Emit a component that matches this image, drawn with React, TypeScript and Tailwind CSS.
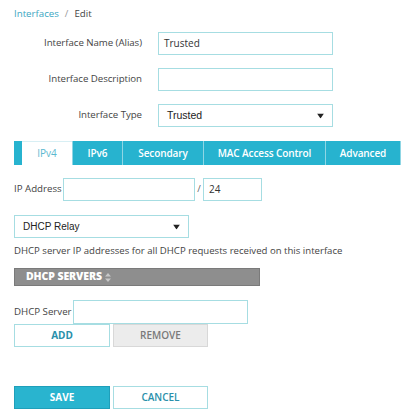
import React from "react";

const font = { fontFamily: "'Open Sans', 'Noto Sans', sans-serif" };
const selFont = { fontFamily: "'Liberation Sans', Arial, sans-serif" };

function Caret() {
  return (
    <svg width="7" height="5" viewBox="0 0 7 5" className="absolute right-[8px] top-1/2 -translate-y-1/2">
      <path d="M0 0h7L3.5 5z" fill="#222" />
    </svg>
  );
}

function Row({ label, children }: { label: string; children: React.ReactNode }) {
  return (
    <div className="flex items-center h-[23px]">
      <div className="w-[142px] text-right text-[9.7px] tracking-[-0.05px] text-[#444] whitespace-nowrap">{label}</div>
      <div className="ml-[16px]">{children}</div>
    </div>
  );
}

const tabs = ["IPv4", "IPv6", "Secondary", "MAC Access Control", "Advanced"];
const tabW = [50, 50, 81, 122, 75];

export default function App() {
  return (
    <div className="w-[403px] h-[413px] bg-white overflow-hidden" style={font}>
      <div className="pl-[14px] pt-[7px] text-[9.7px] leading-[14px] whitespace-nowrap">
        <span className="text-[#3aa6c2]">Interfaces</span>
        <span className="text-[#999] mx-[6px]">/</span>
        <span className="text-[#444]">Edit</span>
      </div>

      <div className="mt-[11px] flex flex-col gap-[13px]">
        <Row label="Interface Name (Alias)">
          <div className="w-[175px] h-[23px] border border-[#a6dde2] flex items-center px-[5px] text-[10px] text-[#333]">Trusted</div>
        </Row>
        <Row label="Interface Description">
          <div className="w-[175px] h-[23px] border border-[#a6dde2]" />
        </Row>
        <Row label="Interface Type">
          <div className="relative w-[175px] h-[23px] border border-[#a6dde2] flex items-center px-[8px] text-[10.5px] text-[#222]" style={selFont}>
            Trusted
            <Caret />
          </div>
        </Row>
      </div>

      <div className="mt-[14px] ml-[14px] w-[387px] h-[24px] bg-[#27b3cf] flex pl-[8px]">
        {tabs.map((t, i) => (
          <div
            key={t}
            style={{ width: tabW[i] }}
            className={
              i === 0
                ? "h-[24px] bg-white flex items-center justify-center text-[10px] text-[#5bb8cf] border-t border-[#d8eff4] whitespace-nowrap"
                : "h-[24px] flex items-center justify-center text-[10px] font-semibold tracking-[-0.1px] text-white border-l border-[#8fd6e4] whitespace-nowrap"
            }
          >
            {t}
          </div>
        ))}
        <div className="w-[1px] h-[24px] bg-[#8fd6e4]" />
      </div>

      <div className="mt-[13px] ml-[14px] flex items-center h-[23px] text-[9.7px] text-[#444] whitespace-nowrap">
        <span className="w-[49px]">IP Address</span>
        <div className="w-[132px] h-[23px] border border-[#a6dde2]" />
        <span className="w-[8px] text-center text-[#666]">/</span>
        <div className="w-[59px] h-[23px] border border-[#a6dde2] flex items-center px-[5px] text-[10px] text-[#333]">24</div>
      </div>

      <div className="mt-[14px] ml-[14px] relative w-[175px] h-[23px] border border-[#a6dde2] flex items-center px-[8px] text-[10px] text-[#222]" style={selFont}>
        DHCP Relay
        <Caret />
      </div>

      <div className="mt-[5px] ml-[14px] text-[9.6px] leading-[16px] text-[#444] whitespace-nowrap">
        DHCP server IP addresses for all DHCP requests received on this interface
      </div>

      <div className="mt-[9px] ml-[14px] w-[246px] h-[18px] bg-[#8e8e8e] border border-[#7a7a7a] flex items-center pl-[11px] text-[10.5px] font-extrabold tracking-[-0.1px] text-white">
        DHCP SERVERS
        <svg width="6" height="9" viewBox="0 0 6 9" className="ml-[3px]">
          <path d="M0 3.6L3 0l3 3.6zM0 5.4L3 9l3-3.6z" fill="#c8c8c8" />
        </svg>
      </div>

      <div className="mt-[14px] ml-[14px] flex items-center h-[24px] text-[9.7px] text-[#444] whitespace-nowrap">
        <span className="w-[59px]">DHCP Server</span>
        <div className="w-[175px] h-[24px] border border-[#a6dde2]" />
      </div>

      <div className="ml-[14px] flex gap-[3px]">
        <div className="w-[96px] h-[23px] border border-[#a6dde2] flex items-center justify-center text-[10px] font-bold text-[#2a90ab]">ADD</div>
        <div className="w-[95px] h-[23px] bg-[#ececec] border border-[#d8d8d8] flex items-center justify-center text-[10px] font-semibold text-[#7a7a7a]">REMOVE</div>
      </div>

      <div className="mt-[39px] ml-[14px] flex gap-[3px]">
        <div className="w-[96px] h-[23px] bg-[#29b4cf] border border-[#1f9fba] flex items-center justify-center text-[10px] font-bold text-white">SAVE</div>
        <div className="w-[95px] h-[23px] border border-[#a6dde2] flex items-center justify-center text-[10px] font-semibold text-[#2a90ab]">CANCEL</div>
      </div>
    </div>
  );
}
